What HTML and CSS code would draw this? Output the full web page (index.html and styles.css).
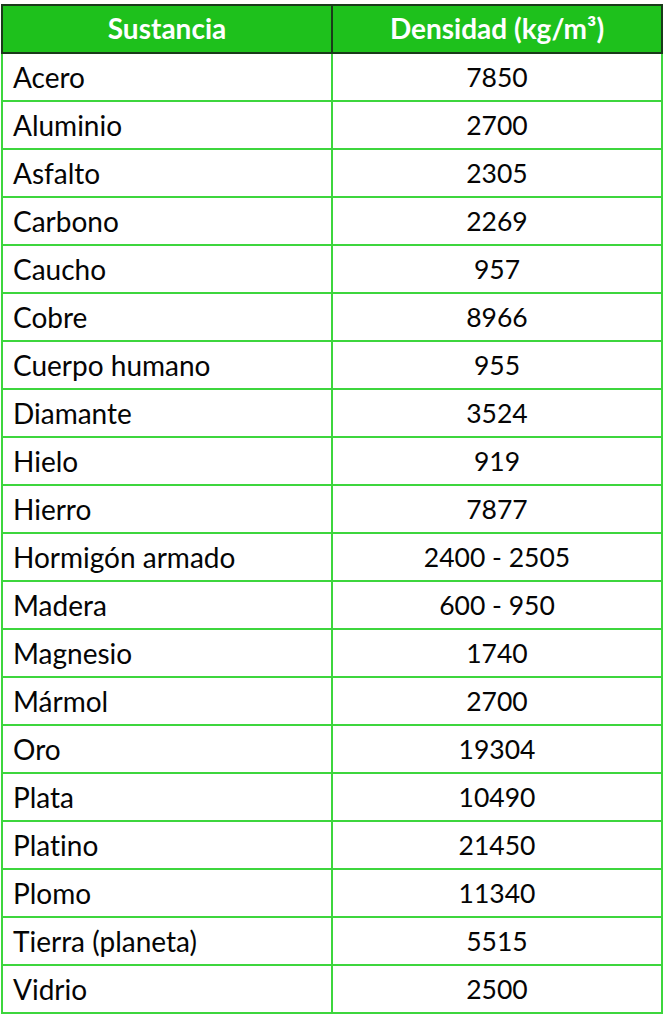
FILE: index.html
```html
<!DOCTYPE html>
<html lang="es">
<head>
<meta charset="utf-8">
<title>Densidad de sustancias</title>
<link rel="stylesheet" href="styles.css">
</head>
<body>
<table class="density">
  <thead>
    <tr><th>Sustancia</th><th>Densidad (kg/m³)</th></tr>
  </thead>
  <tbody>
    <tr><td class="name">Acero</td><td class="val">7850</td></tr>
    <tr><td class="name">Aluminio</td><td class="val">2700</td></tr>
    <tr><td class="name">Asfalto</td><td class="val">2305</td></tr>
    <tr><td class="name">Carbono</td><td class="val">2269</td></tr>
    <tr><td class="name">Caucho</td><td class="val">957</td></tr>
    <tr><td class="name">Cobre</td><td class="val">8966</td></tr>
    <tr><td class="name">Cuerpo humano</td><td class="val">955</td></tr>
    <tr><td class="name">Diamante</td><td class="val">3524</td></tr>
    <tr><td class="name">Hielo</td><td class="val">919</td></tr>
    <tr><td class="name">Hierro</td><td class="val">7877</td></tr>
    <tr><td class="name">Hormigón armado</td><td class="val">2400 - 2505</td></tr>
    <tr><td class="name">Madera</td><td class="val">600 - 950</td></tr>
    <tr><td class="name">Magnesio</td><td class="val">1740</td></tr>
    <tr><td class="name">Mármol</td><td class="val">2700</td></tr>
    <tr><td class="name">Oro</td><td class="val">19304</td></tr>
    <tr><td class="name">Plata</td><td class="val">10490</td></tr>
    <tr><td class="name">Platino</td><td class="val">21450</td></tr>
    <tr><td class="name">Plomo</td><td class="val">11340</td></tr>
    <tr><td class="name">Tierra (planeta)</td><td class="val">5515</td></tr>
    <tr><td class="name">Vidrio</td><td class="val">2500</td></tr>
  </tbody>
</table>
</body>
</html>
```
FILE: styles.css
```css
html, body {
  margin: 0;
  padding: 0;
  background: #ffffff;
}
body {
  padding: 4px 0 0 1px;
  font-family: Lato, "Open Sans", "DejaVu Sans", sans-serif;
  font-variant-ligatures: none;
  color: #050505;
}
.density {
  border-collapse: collapse;
  table-layout: fixed;
  width: 660px;
}
.density th,
.density td {
  height: 48px;
  padding: 0;
  box-sizing: border-box;
  line-height: 1;
}
.density th {
  background: #1ec11c;
  color: #ffffff;
  font-size: 28px;
  font-weight: 700;
  text-align: center;
  border: 2px solid #1a3a1a;
  width: 330px;
  padding-bottom: 3px;
}
.density td {
  border: 2px solid #3dd63d;
  font-weight: 400;
}
.density .name {
  text-align: left;
  padding-left: 10px;
  font-size: 28px;
}
.density .val {
  text-align: center;
  font-size: 26.5px;
}
```
